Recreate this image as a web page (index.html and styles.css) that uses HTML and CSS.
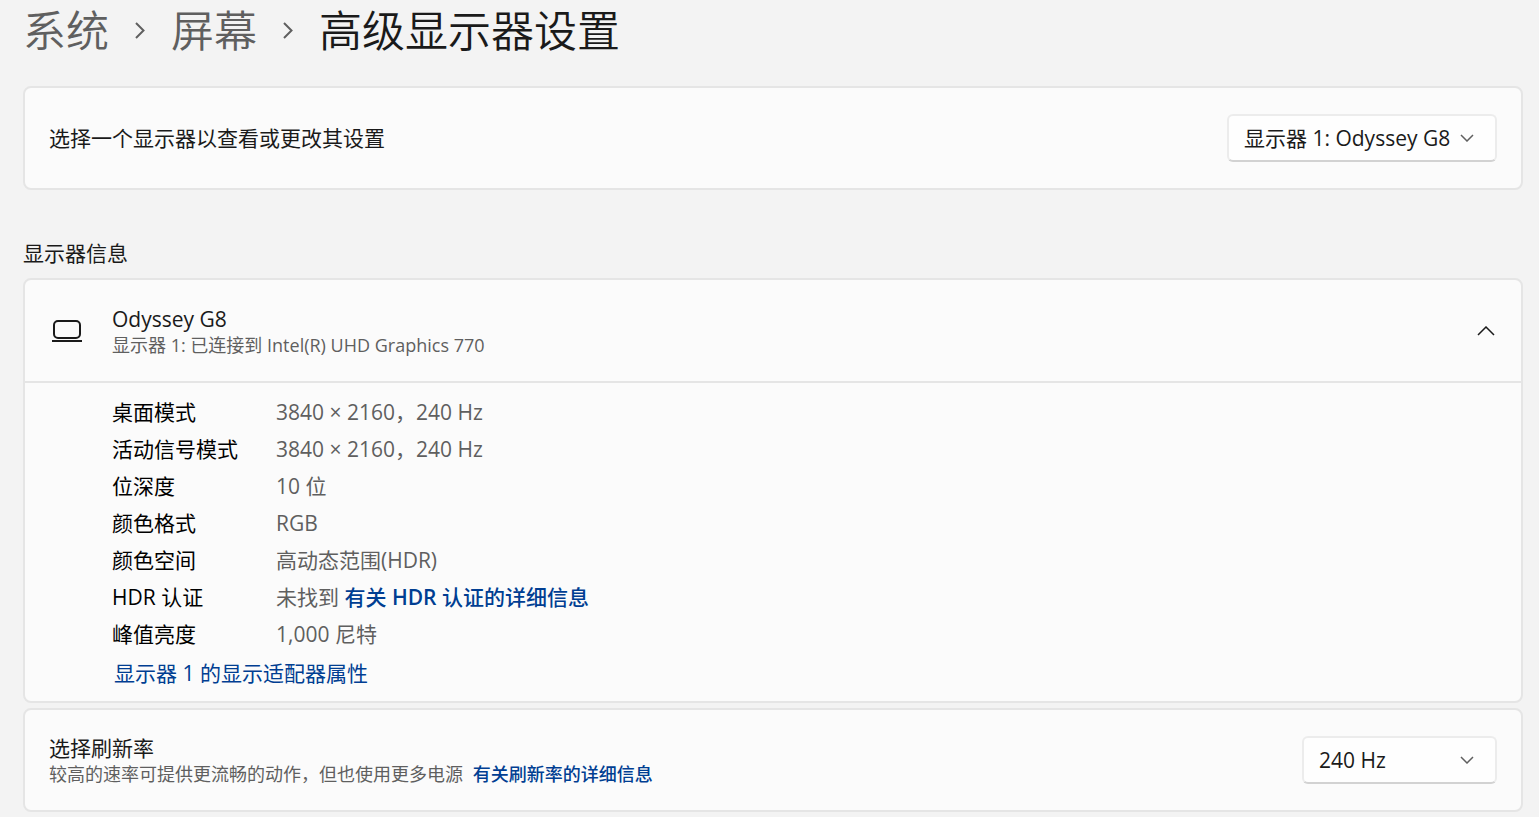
FILE: index.html
```html
<!DOCTYPE html>
<html lang="zh-CN">
<head>
    <meta charset="UTF-8">
    <meta name="viewport" content="width=device-width, initial-scale=1.0">
    <title>高级显示器设置</title>
    <link rel="stylesheet" href="styles.css">
</head>
<body>
    <main class="page">
        <nav class="breadcrumb">
            <a href="#system">系统</a>
            <svg class="separator" width="12" height="20" viewBox="0 0 12 20" aria-hidden="true"><path d="M2 2l7.5 7.5L2 17"/></svg>
            <a href="#display">屏幕</a>
            <svg class="separator" width="12" height="20" viewBox="0 0 12 20" aria-hidden="true"><path d="M2 2l7.5 7.5L2 17"/></svg>
            <h1>高级显示器设置</h1>
        </nav>

        <section class="card setting">
            <label class="title" for="display">选择一个显示器以查看或更改其设置</label>
            <div class="select-box display-select">
                <select id="display">
                    <option>显示器 1: Odyssey G8</option>
                </select>
                <svg class="arrow" width="14" height="8" viewBox="0 0 14 8" aria-hidden="true"><path d="M1 1l6 6 6-6"/></svg>
            </div>
        </section>

        <h2>显示器信息</h2>
        <section class="card">
            <button class="expander" type="button" aria-expanded="true" aria-controls="details">
                <svg class="laptop" width="32" height="24" viewBox="0 0 32 24" aria-hidden="true">
                    <rect x="3" y="2" width="26" height="17" rx="4"/>
                    <path d="M1 22h30"/>
                </svg>
                <span class="expander-text">
                    <span class="title">Odyssey G8</span>
                    <span class="subtitle">显示器 1: 已连接到 Intel(R) UHD Graphics 770</span>
                </span>
                <svg class="chevron" width="18" height="10" viewBox="0 0 18 10" aria-hidden="true"><path d="M1 9l8-8 8 8"/></svg>
            </button>
            <div class="details" id="details">
                <table>
                    <tbody>
                        <tr><th scope="row">桌面模式</th><td>3840 × 2160，240 Hz</td></tr>
                        <tr><th scope="row">活动信号模式</th><td>3840 × 2160，240 Hz</td></tr>
                        <tr><th scope="row">位深度</th><td>10 位</td></tr>
                        <tr><th scope="row">颜色格式</th><td>RGB</td></tr>
                        <tr><th scope="row">颜色空间</th><td>高动态范围(HDR)</td></tr>
                        <tr><th scope="row">HDR 认证</th><td>未找到 <a class="more" href="#hdr">有关 <b>HDR</b> 认证的详细信息</a></td></tr>
                        <tr><th scope="row">峰值亮度</th><td>1,000 尼特</td></tr>
                    </tbody>
                </table>
                <a class="adapter" href="#adapter">显示器 1 的显示适配器属性</a>
            </div>
        </section>

        <section class="card setting">
            <div class="setting-text">
                <label class="title" for="rate">选择刷新率</label>
                <p class="subtitle">较高的速率可提供更流畅的动作，但也使用更多电源 <a class="more" href="#refresh">有关刷新率的详细信息</a></p>
            </div>
            <div class="select-box rate-select">
                <select id="rate">
                    <option>240 Hz</option>
                </select>
                <svg class="arrow" width="14" height="8" viewBox="0 0 14 8" aria-hidden="true"><path d="M1 1l6 6 6-6"/></svg>
            </div>
        </section>
    </main>
</body>
</html>
```
FILE: styles.css
```css
* {
    box-sizing: border-box;
}
body {
    margin: 0;
    background: #f3f3f3;
    color: #1a1a1a;
    font-family: "Open Sans", "Noto Sans CJK SC", sans-serif;
    font-size: 21px;
    line-height: 28px;
}
a {
    color: #003e92;
    text-decoration: none;
}
svg {
    fill: none;
    stroke: #1a1a1a;
    stroke-width: 2;
    flex-shrink: 0;
}
h1, h2, p {
    margin: 0;
    font-weight: 400;
}
.page {
    padding: 0 16px 0 23px;
}
.breadcrumb {
    display: flex;
    align-items: center;
    gap: 25px;
    height: 62px;
    margin-bottom: 24px;
    font-size: 43px;
    font-weight: 350;
    line-height: 62px;
}
.breadcrumb a {
    color: #5f5f5f;
}
.breadcrumb h1 {
    font-size: 43px;
    font-weight: 350;
}
.separator {
    stroke: #5f5f5f;
}
h2 {
    margin: 49px 0 11px;
    font-size: 21px;
}
.card {
    margin-bottom: 5px;
    background: #fbfbfb;
    border: 2px solid #e5e5e5;
    border-radius: 8px;
}
.setting {
    display: flex;
    align-items: center;
    justify-content: space-between;
    min-height: 104px;
    padding: 0 24px;
}
.subtitle {
    color: #5f5f5f;
    font-size: 18px;
    line-height: 24px;
}
.more {
    font-weight: 500;
}
.more b {
    font-weight: 600;
}
.subtitle .more {
    margin-left: 5px;
}
.select-box {
    position: relative;
}
.display-select {
    width: 270px;
}
.rate-select {
    width: 195px;
}
select {
    appearance: none;
    display: block;
    width: 100%;
    height: 48px;
    padding: 0 36px 0 15px;
    background: #fefefe;
    border: 2px solid #ececec;
    border-bottom-color: #d2d2d2;
    border-radius: 6px;
    color: #1a1a1a;
    font: inherit;
}
.arrow {
    position: absolute;
    top: 20px;
    right: 23px;
    stroke: #5f5f5f;
    stroke-width: 1.5;
    pointer-events: none;
}
.chevron {
    stroke-width: 1.5;
}
.expander {
    display: flex;
    align-items: center;
    width: 100%;
    min-height: 103px;
    padding: 0 26px;
    background: none;
    border: 0;
    border-bottom: 2px solid #e5e5e5;
    color: inherit;
    font: inherit;
    text-align: left;
}
.expander-text {
    display: flex;
    flex-direction: column;
    flex: 1;
    margin-left: 29px;
}
.details {
    padding: 10px 24px 14px 87px;
}
table {
    border-collapse: collapse;
}
th, td {
    height: 37px;
    padding: 0;
    font-weight: 400;
    text-align: left;
}
th {
    width: 164px;
    color: #000;
}
td {
    color: #5f5f5f;
}
.adapter {
    display: block;
    width: fit-content;
    margin: 7px 0 0 2px;
}
```
